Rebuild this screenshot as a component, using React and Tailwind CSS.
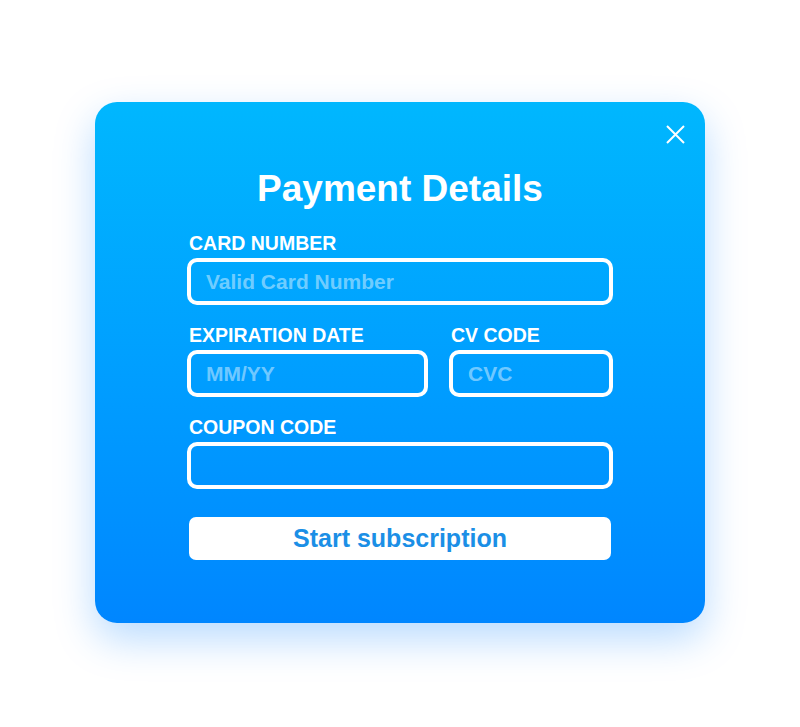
import React, { useState } from "react";

const Field = ({ label, name, placeholder, value, onChange, className = "" }) => {
  return (
    <div className={"flex flex-col " + className}>
      <label
        htmlFor={name}
        className="pl-[2px] mb-[5px] text-[19.5px] leading-[20px] font-bold text-white"
      >
        {label}
      </label>
      <input
        id={name}
        name={name}
        type="text"
        placeholder={placeholder}
        value={value}
        onChange={onChange}
        className="h-[47px] w-full bg-transparent border-[4px] border-white rounded-[10px] pl-[15px] text-[21px] font-bold text-white placeholder:text-white/45 outline-none"
      />
    </div>
  );
};

const App = () => {
  const [formData, setformData] = useState({
    cardNumber: "",
    expiration: "",
    cvc: "",
    coupon: "",
  });

  const handleInputChange = (e) => {
    const { name, value } = e.target;
    setformData({ ...formData, [name]: value });
  };

  const handleSubmit = (e) => {
    e.preventDefault();
  };

  return (
    <div
      className="min-h-[727px] bg-white pt-[102px]"
      style={{ fontFamily: '"Liberation Sans", Arial, sans-serif' }}
    >
      <div className="relative mx-auto w-[610px] h-[521px] rounded-[22px] bg-gradient-to-b from-[#00b7fe] to-[#0086ff] shadow-[0_16px_40px_rgba(0,125,255,0.28)] px-[92px] pt-[66px]">
        {/* close button */}
        <button
          type="button"
          className="absolute top-[23px] right-[20px] w-[19px] h-[19px] flex items-center justify-center"
        >
          <svg width="19" height="19" viewBox="0 0 19 19" fill="none">
            <path d="M1 1L18 18M18 1L1 18" stroke="white" strokeWidth="2" />
          </svg>
        </button>

        <h1 className="text-center text-[37px] leading-[42px] font-bold text-white">
          Payment Details
        </h1>

        <form onSubmit={handleSubmit} className="flex flex-col">
          <Field
            className="mt-[23px]"
            label="CARD NUMBER"
            name="cardNumber"
            placeholder="Valid Card Number"
            value={formData.cardNumber}
            onChange={handleInputChange}
          />

          <div className="mt-[20px] flex gap-[21px]">
            <Field
              className="w-[241px]"
              label="EXPIRATION DATE"
              name="expiration"
              placeholder="MM/YY"
              value={formData.expiration}
              onChange={handleInputChange}
            />
            <Field
              className="flex-1"
              label="CV CODE"
              name="cvc"
              placeholder="CVC"
              value={formData.cvc}
              onChange={handleInputChange}
            />
          </div>

          <Field
            className="mt-[20px]"
            label="COUPON CODE"
            name="coupon"
            placeholder=""
            value={formData.coupon}
            onChange={handleInputChange}
          />

          <button
            type="submit"
            className="mt-[28px] mx-[2px] h-[43px] rounded-[7px] bg-white text-[25px] font-bold text-[#1b8fe6]"
          >
            Start subscription
          </button>
        </form>
      </div>
    </div>
  );
};

export default App;
